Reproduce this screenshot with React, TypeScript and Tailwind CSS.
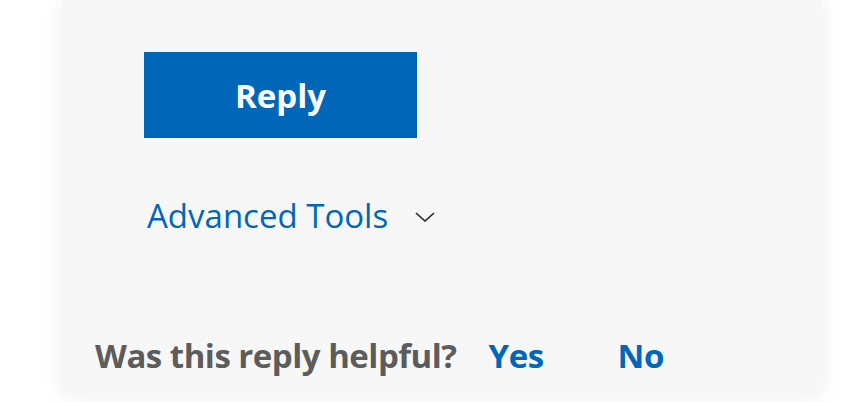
import React from "react";

export default function App() {
  return (
    <div className="w-[865px] h-[402px] bg-white overflow-hidden" style={{ fontFamily: '"Open Sans", "Noto Sans", sans-serif' }}>
      <div className="ml-[62px] w-[760px] h-[395px] bg-[#f7f7f7] shadow-[0_0_22px_rgba(0,0,0,0.07)] flex flex-col">
        <div className="pl-[82px] pt-[52px]">
          <button className="w-[273px] h-[86px] bg-[#0067b8] text-white text-[33px] leading-none font-bold flex items-center justify-center">
            Reply
          </button>
        </div>
        <div className="pl-[85px] mt-[58px] flex items-center">
          <span className="text-[33px] leading-[40px] text-[#0067b8]">Advanced Tools</span>
          <svg className="ml-[27px] mt-[2px]" width="20" height="10" viewBox="0 0 20 10" fill="none">
            <path d="M1 1 L10 9 L19 1" stroke="#262626" strokeWidth="1.6" />
          </svg>
        </div>
        <div className="pl-[33px] mt-[100px] flex items-center">
          <span className="text-[33px] leading-[40px] font-bold tracking-[-0.5px] text-[#5c5c5c]">Was this reply helpful?</span>
          <span className="ml-[32px] text-[33px] leading-[40px] font-bold tracking-[-0.5px] text-[#0067b8]">Yes</span>
          <span className="ml-[74px] text-[33px] leading-[40px] font-bold tracking-[-0.5px] text-[#0067b8]">No</span>
        </div>
      </div>
    </div>
  );
}
